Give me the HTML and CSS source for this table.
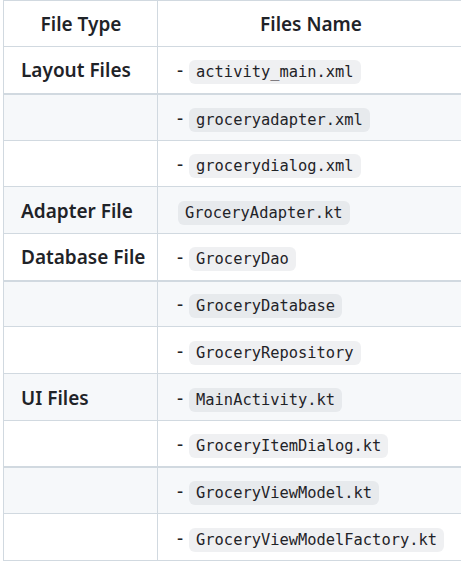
FILE: index.html
```html
<!DOCTYPE html>
<html>
<head>
<meta charset="utf-8">
<link rel="stylesheet" href="styles.css">
</head>
<body>
<table class="files">
  <thead>
    <tr class="h46"><th class="type">File Type</th><th>Files Name</th></tr>
  </thead>
  <tbody>
    <tr class="h47"><td class="type">Layout Files</td><td>- <code>activity_main.xml</code></td></tr>
    <tr class="h47 thick"><td></td><td>- <code>groceryadapter.xml</code></td></tr>
    <tr class="h46"><td></td><td>- <code>grocerydialog.xml</code></td></tr>
    <tr class="h47"><td class="type">Adapter File</td><td><code>GroceryAdapter.kt</code></td></tr>
    <tr class="h47"><td class="type">Database File</td><td>- <code>GroceryDao</code></td></tr>
    <tr class="h46 thick"><td></td><td>- <code>GroceryDatabase</code></td></tr>
    <tr class="h47"><td></td><td>- <code>GroceryRepository</code></td></tr>
    <tr class="h47"><td class="type">UI Files</td><td>- <code>MainActivity.kt</code></td></tr>
    <tr class="h46"><td></td><td>- <code>GroceryItemDialog.kt</code></td></tr>
    <tr class="h47 thick"><td></td><td>- <code>GroceryViewModel.kt</code></td></tr>
    <tr class="h47"><td></td><td>- <code>GroceryViewModelFactory.kt</code></td></tr>
  </tbody>
</table>
</body>
</html>
```
FILE: styles.css
```css
html, body {
  margin: 0;
  padding: 0;
  background: #ffffff;
  overflow: hidden;
}
body {
  padding-left: 3px;
  font-family: "Noto Sans", "Open Sans", sans-serif;
  font-size: 19px;
  color: #1f2328;
}
.files {
  border-collapse: collapse;
  border-spacing: 0;
  width: 461px;
  table-layout: fixed;
}
.files th,
.files td {
  border: 1px solid #d1d9e0;
  padding: 1px 16px 0 17px;
  vertical-align: middle;
  white-space: nowrap;
}
.files th:first-child,
.files td:first-child {
  width: 120px;
}
.files td + td {
  padding-left: 19px;
}
.files th {
  font-weight: 600;
  text-align: center;
}
.files td.type {
  font-weight: 600;
}
.files tbody tr:nth-child(2n) {
  background: #f6f8fa;
}
.h46 { height: 46px; }
.h47 { height: 47px; }
.files tr.thick td {
  border-top: 2px solid #d1d9e0;
}
code {
  font-family: "DejaVu Sans Mono", "Liberation Mono", monospace;
  font-size: 15.4px;
  background: rgba(129, 139, 152, 0.13);
  border-radius: 6px;
  padding: 3px 7px;
  margin-left: 1px;
}
```
